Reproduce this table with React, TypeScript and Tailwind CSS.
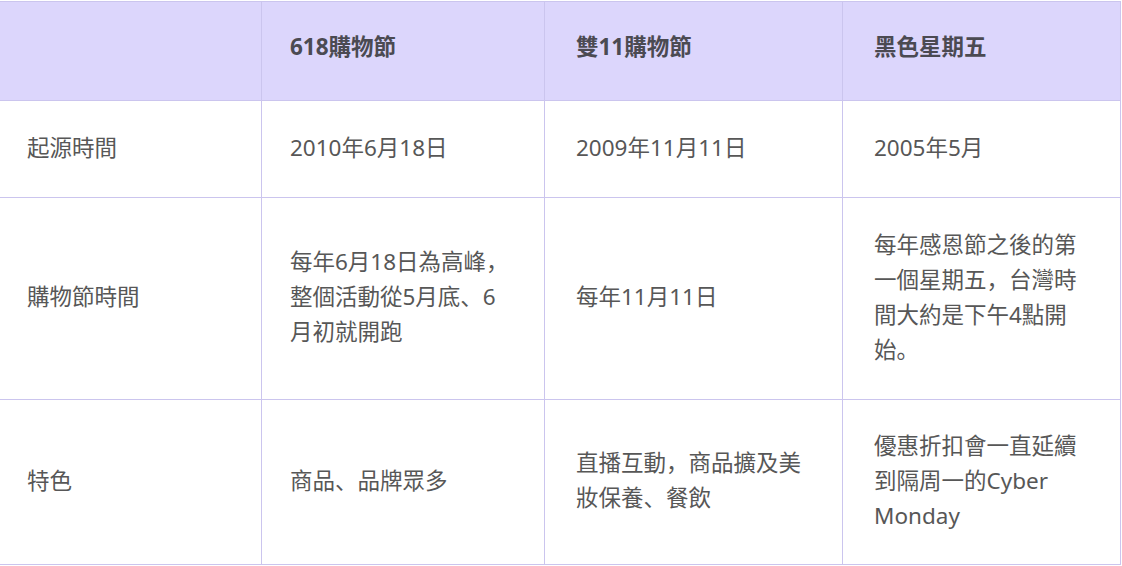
import React from "react";

const headers = ["", "618購物節", "雙11購物節", "黑色星期五"];
const rows: string[][] = [
  ["起源時間", "2010年6月18日", "2009年11月11日", "2005年5月"],
  [
    "購物節時間",
    "每年6月18日為高峰，整個活動從5月底、6月初就開跑",
    "每年11月11日",
    "每年感恩節之後的第一個星期五，台灣時間大約是下午4點開始。",
  ],
  ["特色", "商品、品牌眾多", "直播互動，商品擴及美妝保養、餐飲", "優惠折扣會一直延續到隔周一的Cyber Monday"],
];

const pads = ["pl-[27px] pr-[24px]", "pl-[28px] pr-[26px]", "pl-[31px] pr-[28px]", "pl-[31px] pr-[26px]"];

export default function App() {
  return (
    <div
      className="w-[1122px] h-[566px] bg-white overflow-hidden"
      style={{ fontFamily: '"Noto Sans", "Noto Sans CJK SC", sans-serif' }}
    >
      <div className="mt-px w-[1121px] bg-[#cbc5ee] pt-px pr-px pb-px">
        <div className="grid grid-cols-[261px_282px_297px_277px] grid-rows-[98px_96px_201px_164px] gap-px">
          {headers.map((h, i) => (
            <div
              key={"h" + i}
              className={`flex items-center bg-[#dcd6fc] ${pads[i]} pb-[9px] text-[22.5px] leading-[35px] font-bold text-[#4b4a52]`}
            >
              {h}
            </div>
          ))}
          {rows.map((r, ri) =>
            r.map((c, ci) => (
              <div
                key={ri + "-" + ci}
                className={`flex items-center bg-white ${pads[ci]} pb-[4px] text-[22.5px] leading-[35px] text-[#575757]`}
              >
                <span>{c}</span>
              </div>
            ))
          )}
        </div>
      </div>
    </div>
  );
}
